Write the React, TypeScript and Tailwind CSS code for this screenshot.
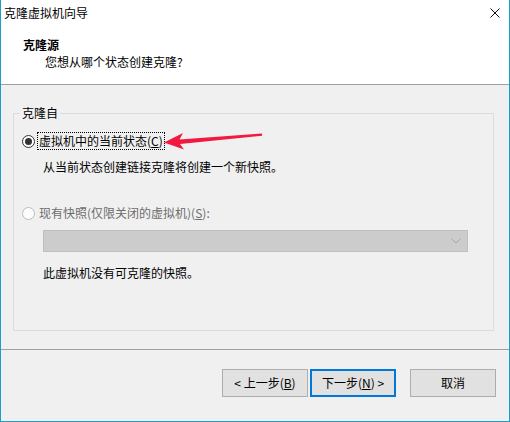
import React from 'react';

const Radio: React.FC<{ checked?: boolean; disabled?: boolean }> = ({ checked, disabled }) => (
    <span
        className={`w-[13px] h-[13px] rounded-full border flex items-center justify-center shrink-0 ${
            disabled ? 'border-[#bcbcbc] bg-[#fcfcfc]' : 'border-[#333333] bg-white'
        }`}
    >
        {checked && <span className="w-[7px] h-[7px] rounded-full bg-[#333333]" />}
    </span>
);

const Button: React.FC<{ children: React.ReactNode; primary?: boolean }> = ({ children, primary }) => (
    <button
        className={`w-[86px] h-[28px] bg-[#e1e1e1] text-[12px] leading-none text-black flex items-center justify-center ${
            primary ? 'border-2 border-[#0078d7]' : 'border border-[#adadad]'
        }`}
    >
        {children}
    </button>
);

export default function App() {
    return (
        <div className="relative w-[510px] h-[422px] flex flex-col bg-[#f0f0f0] border-l border-r border-b border-[#1a9fcb] font-['Noto_Sans_CJK_SC',sans-serif] text-[12px] text-black">
            {/* title bar */}
            <div className="h-[26px] bg-white flex items-center justify-between pl-[3px] pr-[9px]">
                <span className="leading-[16px]">克隆虚拟机向导</span>
                <svg width="10" height="10" viewBox="0 0 10 10">
                    <path d="M0.5 0.5 L9.5 9.5 M9.5 0.5 L0.5 9.5" stroke="#111" strokeWidth="1" />
                </svg>
            </div>

            {/* header */}
            <div className="h-[58px] bg-white pl-[22px] pt-[11px]">
                <div className="font-bold leading-[16px]">克隆源</div>
                <div className="ml-[22px] mt-[1px] leading-[16px]">您想从哪个状态创建克隆?</div>
            </div>
            <div className="h-px bg-[#a0a0a0]" />

            {/* group box */}
            <fieldset className="ml-[12px] mt-[18px] w-[481px] h-[228px] border border-[#dcdcdc] pl-[6px]">
                <legend className="px-[2px] leading-[20px]">克隆自</legend>

                <div className="mt-[8px] ml-[2px] h-[20px] flex items-center">
                    <Radio checked />
                    <span className="ml-[2px] px-[1px] h-[18px] flex items-center border border-dotted border-black leading-[16px]">
                        虚拟机中的当前状态(<span className="underline">C</span>)
                    </span>
                </div>
                <div className="mt-[7px] ml-[23px] leading-[18px]">从当前状态创建链接克隆将创建一个新快照。</div>

                <div className="mt-[27px] ml-[2px] h-[20px] flex items-center text-[#6d6d6d]">
                    <Radio disabled />
                    <span className="ml-[4px] leading-[16px]">
                        现有快照(仅限关闭的虚拟机)(<span className="underline">S</span>):
                    </span>
                </div>

                <div className="mt-[7px] ml-[23px] w-[425px] h-[22px] bg-[#cccccc] border border-[#bfbfbf] flex items-center justify-end pr-[6px]">
                    <svg width="10" height="6" viewBox="0 0 10 6">
                        <path d="M0.5 0.5 L5 5 L9.5 0.5" fill="none" stroke="#a8a8a8" strokeWidth="1" />
                    </svg>
                </div>

                <div className="mt-[12px] ml-[23px] leading-[18px]">此虚拟机没有可克隆的快照。</div>
            </fieldset>

            <div className="mt-[18px] h-px bg-[#a0a0a0]" />

            {/* buttons */}
            <div className="mt-[19px] flex pl-[221px]">
                <Button>
                    &lt; 上一步(<span className="underline">B</span>)
                </Button>
                <div className="ml-[2px]">
                    <Button primary>
                        下一步(<span className="underline">N</span>) &gt;
                    </Button>
                </div>
                <div className="ml-[14px]">
                    <Button>取消</Button>
                </div>
            </div>

            {/* annotation arrow */}
            <svg className="absolute left-[-1px] top-0 pointer-events-none" width="510" height="422" viewBox="0 0 510 422">
                <polygon
                    points="164,142.5 183,133 179.5,139.5 262,133.5 262,135.8 180,144 184,149.5"
                    fill="#f2183f"
                />
            </svg>
        </div>
    );
}
